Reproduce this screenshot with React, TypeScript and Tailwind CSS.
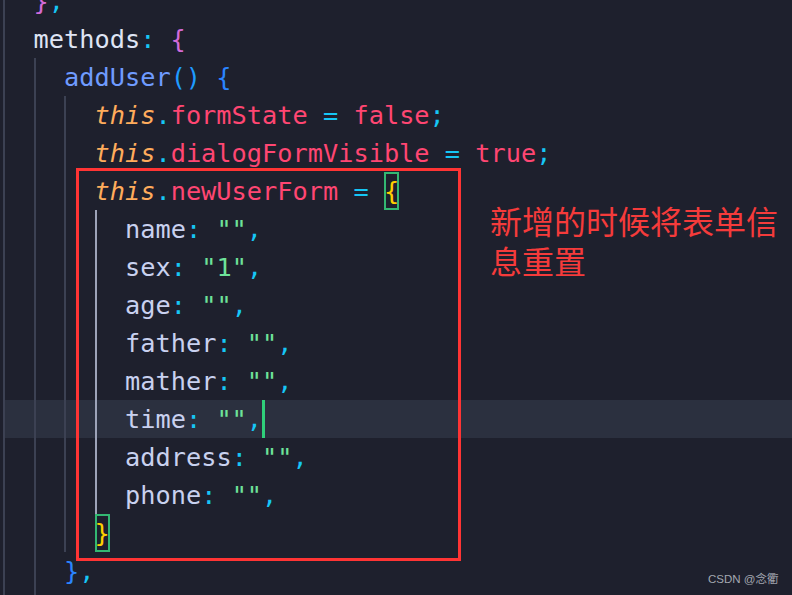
import React from "react";

const G = "#3c4153";
const A = "#9da3b8";

type Tok = [string, string, boolean?];

const C = {
  plain: "text-[#dfe4f4]",
  key: "text-[#c9d1ef]",
  kw: "text-[#ffac5c]",
  prop: "text-[#ff4672]",
  punc: "text-[#16c6f5]",
  str: "text-[#6ee39a]",
  fn: "text-[#6f9bff]",
  paren: "text-[#1f9bff]",
  blue: "text-[#2b84ff]",
  pink: "text-[#d36ad8]",
  yellow: "text-[#ffd000]",
};

function Brace({ ch }: { ch: string }) {
  return (
    <span className={`inline-flex h-[38px] w-[15.25px] items-center justify-center pt-[2px] shadow-[inset_0_0_0_2px_#33b872] ${C.yellow}`}>
      {ch}
    </span>
  );
}

function Line({
  guides,
  children,
  active,
}: {
  guides: (string | null)[];
  children?: React.ReactNode;
  active?: boolean;
}) {
  return (
    <div className={`flex h-[38px] items-center whitespace-pre ${active ? "bg-[#2b303f]" : ""}`}>
      {guides.map((g, i) => (
        <span
          key={i}
          className="h-full w-[30.5px] shrink-0 border-l-2"
          style={{ borderColor: g ?? "transparent" }}
        />
      ))}
      <span className="flex h-full items-center">{children}</span>
    </div>
  );
}

function Toks({ t }: { t: Tok[] }) {
  return (
    <span className="pt-[2px]">
      {t.map(([s, c, it], i) => (
        <span key={i} className={`${c} ${it ? "italic" : ""}`}>
          {s}
        </span>
      ))}
    </span>
  );
}

const fields: [string, string][] = [
  ["name", '""'],
  ["sex", '"1"'],
  ["age", '""'],
  ["father", '""'],
  ["mather", '""'],
  ["time", '""'],
  ["address", '""'],
  ["phone", '""'],
];

export default function App() {
  return (
    <div className="relative h-[595px] w-[792px] overflow-hidden bg-[#1e202d]">
      <div className="mt-[-18px] pl-[3px] font-['DejaVu_Sans_Mono',monospace] text-[25.3px] leading-[38px]">
        <Line guides={[G]}>
          <Toks t={[["}", C.pink], [",", C.punc]]} />
        </Line>
        <Line guides={[G]}>
          <Toks t={[["methods", C.plain], [": ", C.punc], ["{", C.pink]]} />
        </Line>
        <Line guides={[G, G]}>
          <Toks t={[["addUser", C.fn], ["()", C.paren], [" ", C.plain], ["{", C.blue]]} />
        </Line>
        <Line guides={[G, G, G]}>
          <Toks
            t={[
              ["this", C.kw, true],
              [".", C.punc],
              ["formState", C.prop],
              [" = ", C.punc],
              ["false", C.prop],
              [";", C.punc],
            ]}
          />
        </Line>
        <Line guides={[G, G, G]}>
          <Toks
            t={[
              ["this", C.kw, true],
              [".", C.punc],
              ["dialogFormVisible", C.prop],
              [" = ", C.punc],
              ["true", C.prop],
              [";", C.punc],
            ]}
          />
        </Line>
        <Line guides={[G, G, G]}>
          <Toks t={[["this", C.kw, true], [".", C.punc], ["newUserForm", C.prop], [" = ", C.punc]]} />
          <Brace ch="{" />
        </Line>
        {fields.map(([k, v]) => (
          <Line key={k} guides={[G, G, G, A]} active={k === "time"}>
            <Toks t={[[k, C.key], [": ", C.punc], [v, C.str], [",", C.punc]]} />
            {k === "time" && <span className="h-full w-[3px] bg-[#2fd07a]" />}
          </Line>
        ))}
        <Line guides={[G, G, G]}>
          <Brace ch="}" />
        </Line>
        <Line guides={[G, G]}>
          <Toks t={[["}", C.blue], [",", C.punc]]} />
        </Line>
        <Line guides={[G, G]} />
      </div>

      <div className="absolute left-[76px] top-[168px] h-[393px] w-[385px] border-[3px] border-[#ff3434]" />

      <div className="absolute left-[490px] top-[200px] font-['Noto_Sans_CJK_SC',sans-serif] text-[32px] leading-[40px] text-[#f53b3b]">
        新增的时候将表单信
        <br />
        息重置
      </div>

      <div className="absolute left-[708px] top-[571px] font-['Liberation_Sans','Noto_Sans_CJK_SC',sans-serif] text-[11.5px] text-[#a3a7b0]">
        CSDN @念衢
      </div>
    </div>
  );
}
